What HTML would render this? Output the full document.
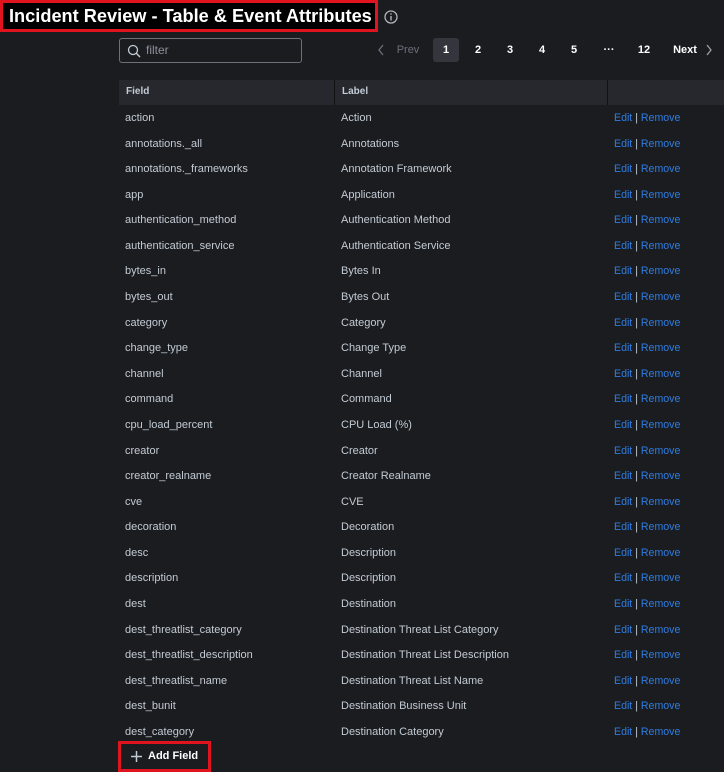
<!DOCTYPE html>
<html><head><style>
body{margin:0;width:724px;height:772px;background:#1a1c20;font-family:"Liberation Sans",sans-serif;position:relative;overflow:hidden;color:#c3cbd4}
.abs{position:absolute}
.title{left:0;top:0;height:26px;border:3px solid #e0141e;background:#000;color:#fff;font-weight:bold;font-size:18.2px;line-height:26px;padding-left:6px;width:366px;white-space:nowrap}
.filter{left:119px;top:38px;width:181px;height:23px;border:1px solid #6b7079;border-radius:3px}
.filter span{position:absolute;left:26px;top:4px;font-size:12px;color:#8b919a}
.pg{top:38px;height:24px;line-height:24px;font-size:11px;font-weight:bold;color:#fff;text-align:center}
.hdr{left:119px;top:80px;width:605px;height:25px;background:#26282d}
.hdr span{position:absolute;top:6px;font-size:10px;font-weight:bold;color:#c3cbd4}
.div{top:80px;width:1px;height:25px;background:#111}
.row{left:119px;width:605px;height:25px;font-size:11px;line-height:25px}
.row span{position:absolute;top:0}
.a{color:#2f7de1}
</style></head><body>
<div class="abs title">Incident Review - Table &amp; Event Attributes</div>
<svg class="abs" style="left:383px;top:9px" width="16" height="16" viewBox="0 0 16 16"><circle cx="8" cy="8" r="6" fill="none" stroke="#b0b5bc" stroke-width="1.3"/><rect x="7.3" y="7" width="1.4" height="4.5" fill="#b0b5bc"/><rect x="7.3" y="4.3" width="1.4" height="1.4" fill="#b0b5bc"/></svg>
<div class="abs filter"><svg style="position:absolute;left:7px;top:5px" width="14" height="14" viewBox="0 0 14 14"><circle cx="6" cy="6" r="4.5" fill="none" stroke="#c3cbd4" stroke-width="1.3"/><line x1="9.3" y1="9.3" x2="13" y2="13" stroke="#c3cbd4" stroke-width="1.4"/></svg><span>filter</span></div>
<svg class="abs" style="left:376px;top:43px" width="10" height="14"><polyline points="7,2 3,7 7,12" fill="none" stroke="#6b7079" stroke-width="1.3"/></svg>
<div class="abs pg" style="left:394px;width:28px;color:#6b7079;font-weight:normal">Prev</div>
<div class="abs pg" style="left:433px;width:26px;background:#33363c;border-radius:3px">1</div>
<div class="abs pg" style="left:466px;width:24px">2</div>
<div class="abs pg" style="left:498px;width:24px">3</div>
<div class="abs pg" style="left:530px;width:24px">4</div>
<div class="abs pg" style="left:562px;width:24px">5</div>
<div class="abs pg" style="left:597px;width:24px">···</div>
<div class="abs pg" style="left:632px;width:24px">12</div>
<div class="abs pg" style="left:670px;width:30px">Next</div>
<svg class="abs" style="left:704px;top:43px" width="10" height="14"><polyline points="3,2 7,7 3,12" fill="none" stroke="#9aa0a8" stroke-width="1.3"/></svg>
<div class="abs hdr"><span style="left:7px">Field</span><span style="left:223px">Label</span></div>
<div class="abs div" style="left:334px"></div><div class="abs div" style="left:607px"></div>
<div id="rows"></div>
<div class="abs" style="left:118px;top:741px;width:87px;height:25px;border:3px solid #e0141e;"><svg style="position:absolute;left:10px;top:7px" width="11" height="11"><path d="M5.5 0V11M0 5.5H11" stroke="#c3cbd4" stroke-width="1.5"/></svg><span style="position:absolute;left:27px;top:6px;font-size:11px;font-weight:bold;color:#fff">Add Field</span></div>
<script>
var d=[["action","Action"],["annotations._all","Annotations"],["annotations._frameworks","Annotation Framework"],["app","Application"],["authentication_method","Authentication Method"],["authentication_service","Authentication Service"],["bytes_in","Bytes In"],["bytes_out","Bytes Out"],["category","Category"],["change_type","Change Type"],["channel","Channel"],["command","Command"],["cpu_load_percent","CPU Load (%)"],["creator","Creator"],["creator_realname","Creator Realname"],["cve","CVE"],["decoration","Decoration"],["desc","Description"],["description","Description"],["dest","Destination"],["dest_threatlist_category","Destination Threat List Category"],["dest_threatlist_description","Destination Threat List Description"],["dest_threatlist_name","Destination Threat List Name"],["dest_bunit","Destination Business Unit"],["dest_category","Destination Category"]];
var h="";d.forEach(function(r,i){var t=106+i*25.58;h+='<div class="abs row" style="top:'+t+'px"><span style="left:6px">'+r[0]+'</span><span style="left:222px">'+r[1]+'</span><span style="left:495px;font-size:10.6px"><span class="a" style="position:static">Edit</span> | <span class="a" style="position:static">Remove</span></span></div>';});
document.getElementById("rows").innerHTML=h;
</script>
</body></html>
